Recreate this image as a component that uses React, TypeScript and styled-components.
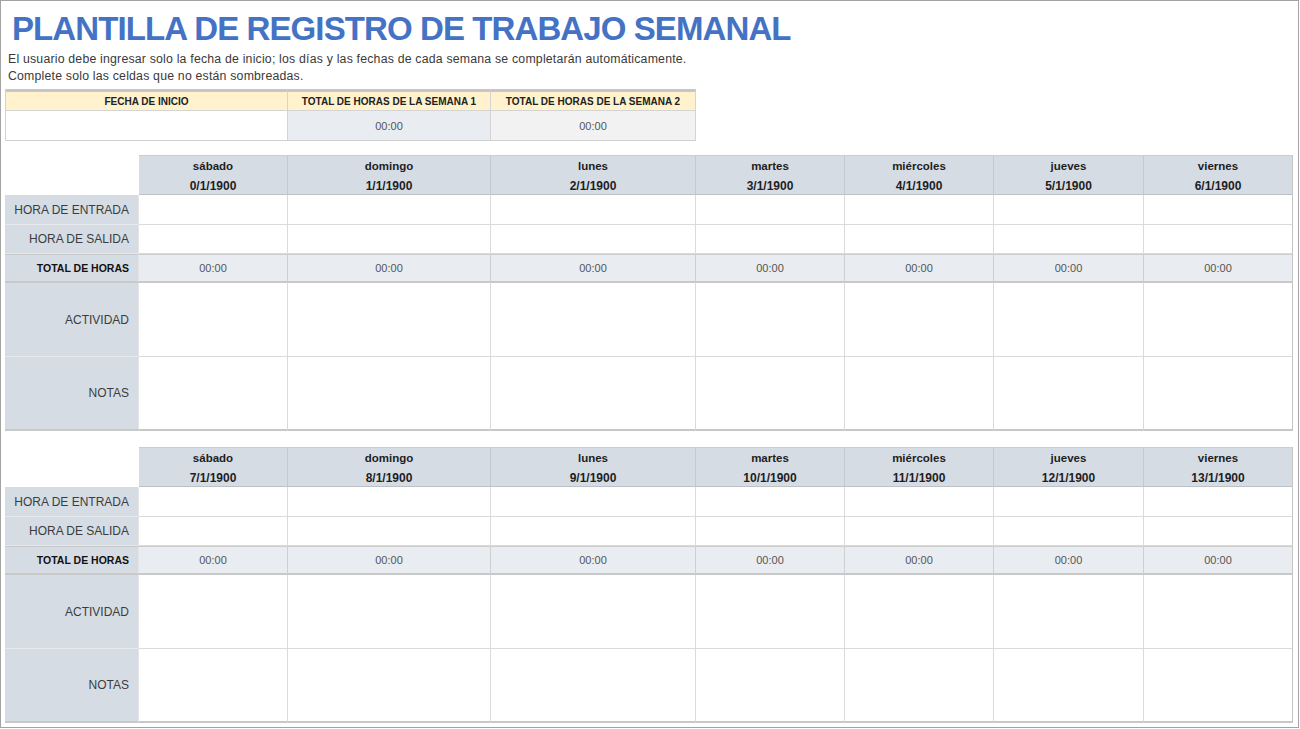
import React from 'react'
import styled, { createGlobalStyle } from 'styled-components'

const GlobalStyle = createGlobalStyle`
  html, body {
    margin: 0;
    padding: 0;
    background: #fff;
  }
  body {
    font-family: 'Liberation Sans', Arial, sans-serif;
    color: #333;
  }
`

const DAYS = ['sábado', 'domingo', 'lunes', 'martes', 'miércoles', 'jueves', 'viernes']
const COLS = '134px 149px 203px 205px 149px 149px 150px 149px'

const Frame = styled.div`
  box-sizing: border-box;
  width: 1299px;
  height: 728px;
  border: 1px solid #a3a3a3;
  padding-left: 4px;
  display: flex;
  flex-direction: column;
  overflow: hidden;
`

const Title = styled.h1`
  margin: 10px 0 0 7px;
  font-family: 'Liberation Sans', sans-serif;
  font-weight: bold;
  font-size: 33px;
  letter-spacing: -0.9px;
  line-height: 36px;
  color: #4472c4;
  white-space: nowrap;
`

const Intro = styled.p`
  margin: 4px 0 0 3px;
  font-size: 12.3px;
  letter-spacing: 0.2px;
  line-height: 16.5px;
  color: #3a3a3a;
`

const TopTable = styled.div`
  display: grid;
  grid-template-columns: 282px 203px 205px;
  grid-template-rows: 22px 30px;
  width: max-content;
  margin-top: 5px;
  border-left: 1px solid #d2d2d2;
`

const TopHead = styled.div`
  box-sizing: border-box;
  background: #fff2cc;
  border-top: 3px solid #c6c6c6;
  border-right: 1px solid #d4d4d4;
  border-bottom: 1px solid #d4d4d4;
  display: flex;
  align-items: center;
  justify-content: center;
  font-size: 10px;
  font-weight: bold;
  color: #222;
`

const TopValue = styled.div<{ $shade?: string }>`
  box-sizing: border-box;
  background: ${p => p.$shade || '#fff'};
  border-right: 1px solid #d4d4d4;
  border-bottom: 1px solid #cfcfcf;
  display: flex;
  align-items: center;
  justify-content: center;
  font-size: 11px;
  color: #555;
`

const WeekGrid = styled.div<{ $gap: number }>`
  display: grid;
  grid-template-columns: ${COLS};
  grid-template-rows: 40px 30px 29px 29px 74px 74px;
  width: max-content;
  margin-top: ${p => p.$gap}px;
`

const Corner = styled.div``

const DayHead = styled.div<{ $last?: boolean }>`
  box-sizing: border-box;
  background: #d6dce4;
  border-top: 1px solid #c9ced5;
  border-right: 1px solid ${p => (p.$last ? '#c4c4c4' : '#c3c9d1')};
  border-bottom: 1px solid #bcc1c8;
  display: flex;
  flex-direction: column;
  align-items: center;
  line-height: 20px;
  font-weight: bold;
  color: #1e1e1e;
`

const DayName = styled.span`
  font-size: 11.5px;
`

const DayDate = styled.span`
  font-size: 12px;
`

const Label = styled.div<{ $total?: boolean; $bottom?: boolean }>`
  box-sizing: border-box;
  background: #d6dce4;
  border-right: 1px solid #e4e4e4;
  border-bottom: ${p =>
    p.$total ? '2px solid #c8c8c8' : p.$bottom ? '2px solid #c8c8c8' : '1px solid #e6e8eb'};
  border-top: ${p => (p.$total ? '1px solid #c8c8c8' : 'none')};
  display: flex;
  align-items: center;
  justify-content: flex-end;
  padding-right: 9px;
  font-size: ${p => (p.$total ? '10.5px' : '12px')};
  font-weight: ${p => (p.$total ? 'bold' : 'normal')};
  color: ${p => (p.$total ? '#111' : '#3c3c3c')};
`

const Cell = styled.div<{ $bottom?: boolean; $last?: boolean }>`
  box-sizing: border-box;
  background: #fff;
  border-right: 1px solid ${p => (p.$last ? '#c4c4c4' : '#dadada')};
  border-bottom: ${p => (p.$bottom ? '2px solid #c8c8c8' : '1px solid #dadada')};
`

const TotalCell = styled.div<{ $last?: boolean }>`
  box-sizing: border-box;
  background: #e9ecf1;
  border-top: 1px solid #cdcdcd;
  border-right: 1px solid ${p => (p.$last ? '#c4c4c4' : '#cfcfcf')};
  border-bottom: 2px solid #c8c8c8;
  display: flex;
  align-items: center;
  justify-content: center;
  font-size: 11px;
  color: #555;
`

const Week = ({ start, gap }: { start: number; gap: number }) => {
  const last = DAYS.length - 1
  return (
    <WeekGrid $gap={gap}>
      <Corner />
      {DAYS.map((d, i) => (
        <DayHead key={d} $last={i === last}>
          <DayName>{d}</DayName>
          <DayDate>{start + i}/1/1900</DayDate>
        </DayHead>
      ))}

      <Label>HORA DE ENTRADA</Label>
      {DAYS.map((d, i) => (
        <Cell key={d} $last={i === last} />
      ))}

      <Label>HORA DE SALIDA</Label>
      {DAYS.map((d, i) => (
        <Cell key={d} $last={i === last} />
      ))}

      <Label $total>TOTAL DE HORAS</Label>
      {DAYS.map((d, i) => (
        <TotalCell key={d} $last={i === last}>
          00:00
        </TotalCell>
      ))}

      <Label>ACTIVIDAD</Label>
      {DAYS.map((d, i) => (
        <Cell key={d} $last={i === last} />
      ))}

      <Label $bottom>NOTAS</Label>
      {DAYS.map((d, i) => (
        <Cell key={d} $last={i === last} $bottom />
      ))}
    </WeekGrid>
  )
}

const App = () => {
  return (
    <>
      <GlobalStyle />
      <Frame>
        <Title>PLANTILLA DE REGISTRO DE TRABAJO SEMANAL</Title>
        <Intro>
          El usuario debe ingresar solo la fecha de inicio; los días y las fechas de cada semana se
          completarán automáticamente.
          <br />
          Complete solo las celdas que no están sombreadas.
        </Intro>
        <TopTable>
          <TopHead>FECHA DE INICIO</TopHead>
          <TopHead>TOTAL DE HORAS DE LA SEMANA 1</TopHead>
          <TopHead>TOTAL DE HORAS DE LA SEMANA 2</TopHead>
          <TopValue />
          <TopValue $shade="#e9ecf1">00:00</TopValue>
          <TopValue $shade="#f2f2f2">00:00</TopValue>
        </TopTable>
        <Week start={0} gap={14} />
        <Week start={7} gap={16} />
      </Frame>
    </>
  )
}

export default App
